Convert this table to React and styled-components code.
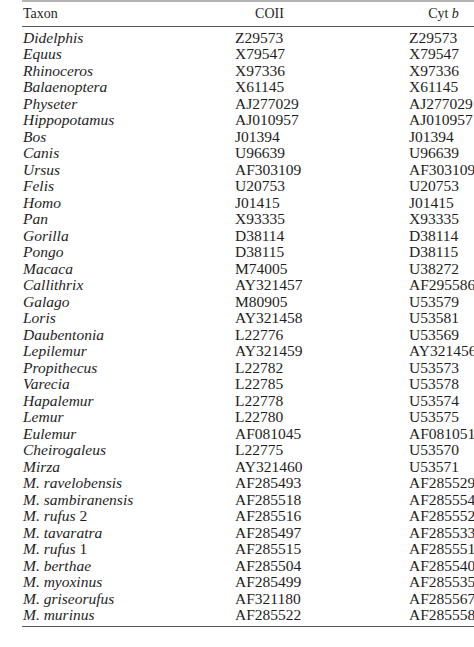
import React from "react";
import styled, { createGlobalStyle } from "styled-components";

const GlobalStyle = createGlobalStyle`
  html, body {
    margin: 0;
    padding: 0;
    background: #fff;
    overflow: hidden;
  }
`;

const Page = styled.div`
  width: 474px;
  height: 647px;
  overflow: hidden;
  padding-left: 22px;
  box-sizing: border-box;
`;

const Table = styled.div`
  width: 480px;
  font-family: "Liberation Serif", "Times New Roman", serif;
  color: #1e1e1e;
  border-top: 2px solid #b4b4b4;
`;

const Row = styled.div`
  display: grid;
  grid-template-columns: 212px 174px 90px;
  padding-left: 1px;
  height: ${(p) => (p.$head ? "23.5px" : "16.5px")};
  line-height: ${(p) => (p.$head ? "24px" : "16.5px")};
  font-size: ${(p) => (p.$head ? "14px" : "15.5px")};
  white-space: nowrap;
`;

const Body = styled.div`
  border-top: 1px solid #5a5a5a;
  border-bottom: 1.5px solid #5a5a5a;
  padding: 3px 0 2px;
`;

const Name = styled.span`
  font-style: italic;
`;

const Plain = styled.span`
  font-style: normal;
`;

const Cell = styled.div`
  width: ${(p) => (p.$center ? "69px" : "auto")};
  text-align: ${(p) => (p.$center ? "center" : "left")};
  overflow: visible;
`;

const rows = [
  ["Didelphis", "Z29573", "Z29573"],
  ["Equus", "X79547", "X79547"],
  ["Rhinoceros", "X97336", "X97336"],
  ["Balaenoptera", "X61145", "X61145"],
  ["Physeter", "AJ277029", "AJ277029"],
  ["Hippopotamus", "AJ010957", "AJ010957"],
  ["Bos", "J01394", "J01394"],
  ["Canis", "U96639", "U96639"],
  ["Ursus", "AF303109", "AF303109"],
  ["Felis", "U20753", "U20753"],
  ["Homo", "J01415", "J01415"],
  ["Pan", "X93335", "X93335"],
  ["Gorilla", "D38114", "D38114"],
  ["Pongo", "D38115", "D38115"],
  ["Macaca", "M74005", "U38272"],
  ["Callithrix", "AY321457", "AF295586"],
  ["Galago", "M80905", "U53579"],
  ["Loris", "AY321458", "U53581"],
  ["Daubentonia", "L22776", "U53569"],
  ["Lepilemur", "AY321459", "AY321456"],
  ["Propithecus", "L22782", "U53573"],
  ["Varecia", "L22785", "U53578"],
  ["Hapalemur", "L22778", "U53574"],
  ["Lemur", "L22780", "U53575"],
  ["Eulemur", "AF081045", "AF081051"],
  ["Cheirogaleus", "L22775", "U53570"],
  ["Mirza", "AY321460", "U53571"],
  ["M. ravelobensis", "AF285493", "AF285529"],
  ["M. sambiranensis", "AF285518", "AF285554"],
  ["M. rufus", "AF285516", "AF285552", "2"],
  ["M. tavaratra", "AF285497", "AF285533"],
  ["M. rufus", "AF285515", "AF285551", "1"],
  ["M. berthae", "AF285504", "AF285540"],
  ["M. myoxinus", "AF285499", "AF285535"],
  ["M. griseorufus", "AF321180", "AF285567"],
  ["M. murinus", "AF285522", "AF285558"],
];

const App = () => {
  return (
    <Page>
      <GlobalStyle />
      <Table>
        <Row $head>
          <Cell>Taxon</Cell>
          <Cell $center>COII</Cell>
          <Cell $center>
            Cyt <Name>b</Name>
          </Cell>
        </Row>
        <Body>
          {rows.map(([taxon, coii, cytb, suffix]) => (
            <Row key={taxon + coii}>
              <Cell>
                <Name>{taxon}</Name>
                {suffix && <Plain> {suffix}</Plain>}
              </Cell>
              <Cell>{coii}</Cell>
              <Cell>{cytb}</Cell>
            </Row>
          ))}
        </Body>
      </Table>
    </Page>
  );
};

export default App;
